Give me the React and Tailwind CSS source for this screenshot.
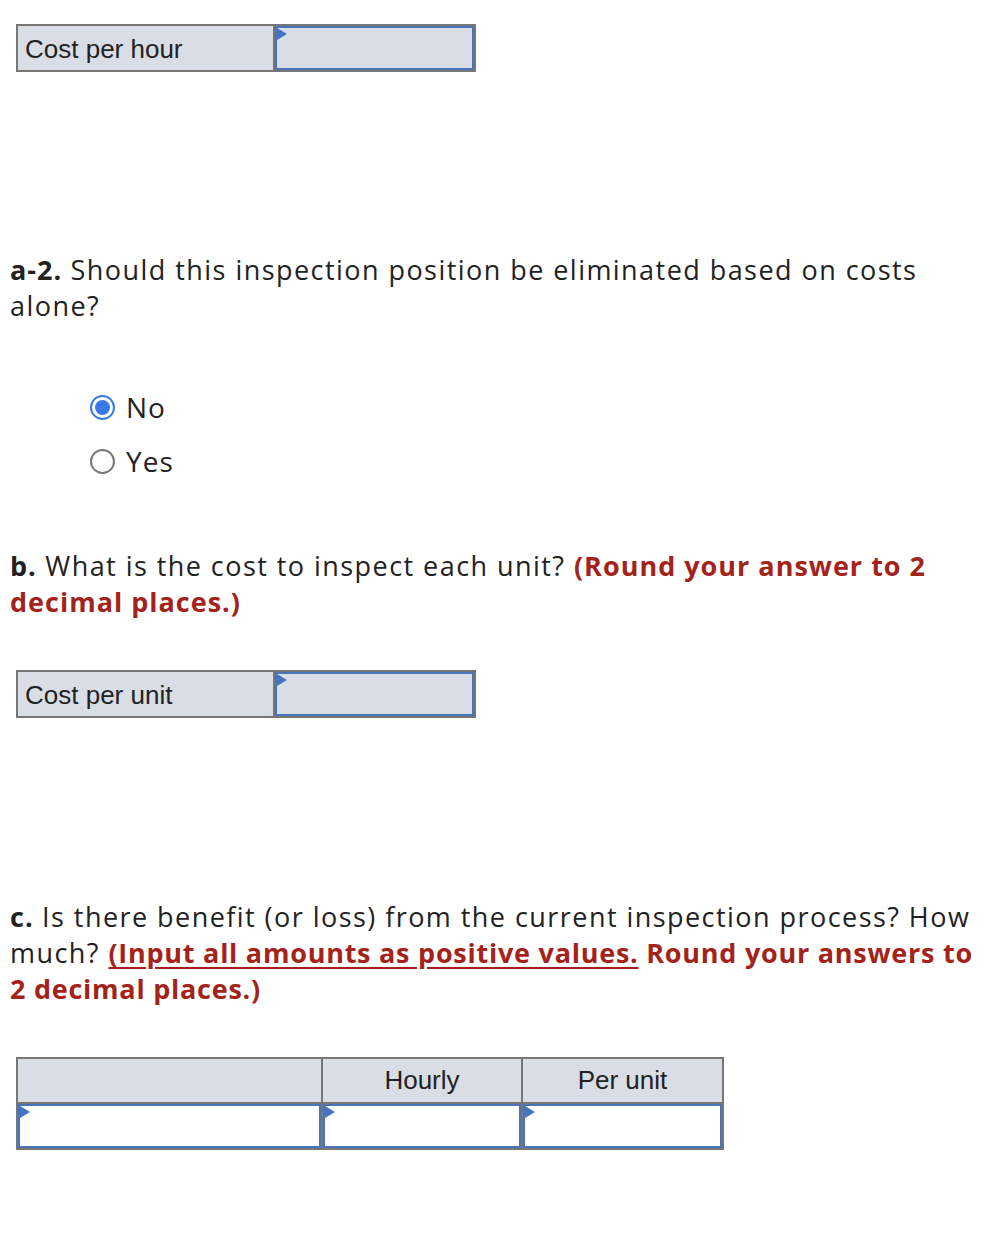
import React from 'react';

const body = { fontFamily: '"Open Sans", Lato, sans-serif' };
const cellFont = { fontFamily: '"Liberation Sans", Arial, sans-serif' };

const Flag = () => (
  <span className="absolute left-0 top-0 w-0 h-0 border-y-[6px] border-y-transparent border-l-[10px] border-l-[#4472c4]" />
);

const InputCell = ({ bg = 'bg-[#d9dde5]', className = '' }) => (
  <div className={`relative border-2 border-[#4a74ba] ${bg} ${className}`}>
    <Flag />
  </div>
);

const LabelRow = ({ label }) => (
  <div className="flex w-[460px] h-[48px] border-2 border-[#767676] bg-[#d9dde5]" style={cellFont}>
    <div className="w-[257px] border-r-2 border-[#767676] flex items-center pl-[7px] pt-[2px] text-[26px] text-[#222]">
      {label}
    </div>
    <InputCell className="flex-1" />
  </div>
);

const Radio = ({ checked, label }) => (
  <label className="flex items-center gap-[11px] h-[54px]">
    <span
      className={`w-[25px] h-[25px] rounded-full flex items-center justify-center ${
        checked ? 'border-2 border-[#3b78e7]' : 'border-2 border-[#777]'
      } bg-white`}
    >
      {checked && <span className="w-[15px] h-[15px] rounded-full bg-[#3b78e7]" />}
    </span>
    <span className="text-[28px] tracking-[1px] text-[#222]">{label}</span>
  </label>
);

export default function App() {
  return (
    <div className="w-[990px] h-[1248px] bg-white text-[#222] pt-[24px]" style={body}>
      <div className="pl-[16px]">
        <LabelRow label="Cost per hour" />
      </div>

      <p className="pl-[10px] pr-[4px] mt-[180px] text-[27px] leading-[36px] tracking-[1.45px]">
        <b className="tracking-[1px]">a-2.</b> Should this inspection position be eliminated based on costs alone?
      </p>

      <div className="pl-[90px] mt-[56px]">
        <Radio checked label="No" />
        <Radio label="Yes" />
      </div>

      <p className="pl-[10px] pr-[4px] mt-[60px] text-[27px] leading-[36px] tracking-[1.45px]">
        <b className="tracking-[1px]">b.</b> What is the cost to inspect each unit?{' '}
        <b className="text-[#a3231b] tracking-[1px]">(Round your answer to 2 decimal places.)</b>
      </p>

      <div className="pl-[16px] mt-[50px]">
        <LabelRow label="Cost per unit" />
      </div>

      <p className="pl-[10px] pr-[4px] mt-[181px] text-[27px] leading-[36px] tracking-[1.45px]">
        <b className="tracking-[1px]">c.</b> Is there benefit (or loss) from the current inspection process? How much?{' '}
        <b className="text-[#a3231b] tracking-[0.75px]">
          <span className="underline underline-offset-4">(Input all amounts as positive values.</span> Round your
          answers to 2 decimal places.)
        </b>
      </p>

      <div className="pl-[16px] mt-[50px]">
        <div className="w-[708px] border-2 border-[#767676]" style={cellFont}>
          <div className="flex h-[45px] bg-[#d9dde5] border-b-2 border-[#767676] text-[26px] text-[#222]">
            <div className="w-[305px] border-r-2 border-[#767676]" />
            <div className="w-[200px] border-r-2 border-[#767676] flex items-center justify-center">Hourly</div>
            <div className="flex-1 flex items-center justify-center">Per unit</div>
          </div>
          <div className="flex h-[44px] bg-[#767676] gap-[2px]">
            <InputCell bg="bg-white" className="w-[303px]" />
            <InputCell bg="bg-white" className="w-[198px]" />
            <InputCell bg="bg-white" className="flex-1" />
          </div>
        </div>
      </div>
    </div>
  );
}
